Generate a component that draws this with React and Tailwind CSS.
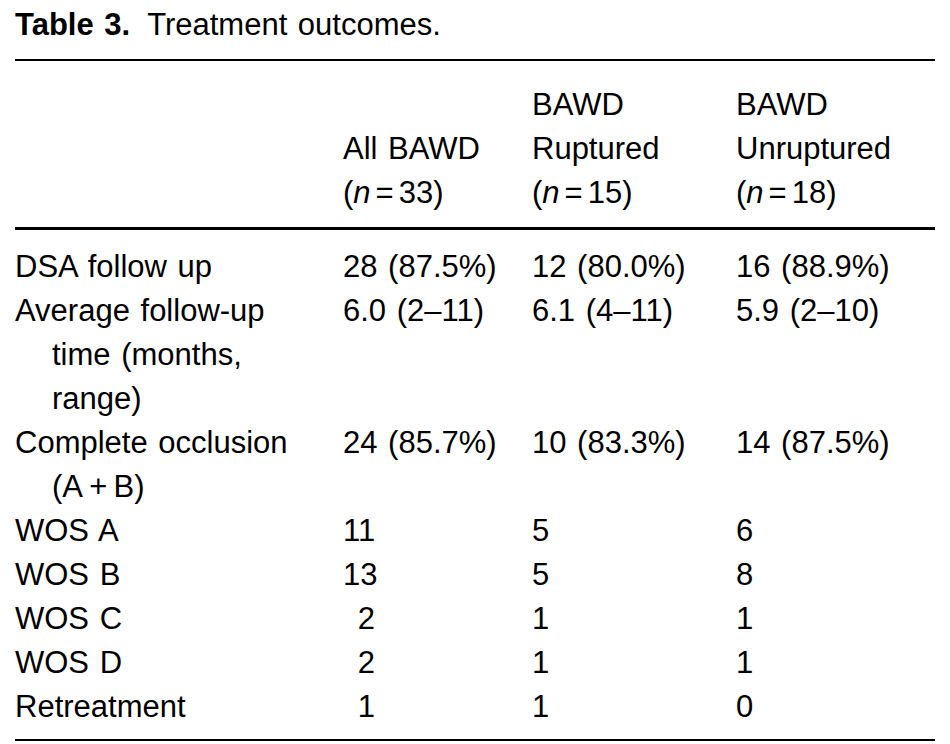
import React from "react";

const rows = [
  { label: "DSA follow up", a: "28 (87.5%)", b: "12 (80.0%)", c: "16 (88.9%)" },
  { label: "Average follow-up time (months, range)", a: "6.0 (2–11)", b: "6.1 (4–11)", c: "5.9 (2–10)" },
  { label: "Complete occlusion (A\u2009+\u2009B)", a: "24 (85.7%)", b: "10 (83.3%)", c: "14 (87.5%)" },
  { label: "WOS A", a: "11", b: "5", c: "6", pad: true },
  { label: "WOS B", a: "13", b: "5", c: "8", pad: true },
  { label: "WOS C", a: "2", b: "1", c: "1", pad: true },
  { label: "WOS D", a: "2", b: "1", c: "1", pad: true },
  { label: "Retreatment", a: "1", b: "1", c: "0", pad: true },
];

const N = ({ v }) => (
  <span>
    (<i>n</i>
    <span className="mx-[5px]">=</span>
    {v})
  </span>
);

const App = () => {
  return (
    <div className="w-[950px] h-[744px] bg-white text-black font-['Liberation_Sans',Arial,sans-serif] text-[31px] leading-[44px] [word-spacing:2px] px-[15px] overflow-hidden">
      <div className="pt-[3px] h-[59px]">
        <span className="font-bold">Table 3.</span>
        <span className="ml-[17px]">Treatment outcomes.</span>
      </div>
      <div className="border-t-2 border-black" />

      <div className="grid grid-cols-[328px_189px_204px_1fr] pt-[22px] pb-[12px] items-end">
        <div />
        <div>
          All BAWD
          <br />
          <N v="33" />
        </div>
        <div>
          BAWD
          <br />
          Ruptured
          <br />
          <N v="15" />
        </div>
        <div>
          BAWD
          <br />
          Unruptured
          <br />
          <N v="18" />
        </div>
      </div>
      <div className="border-t-[3px] border-black" />

      <div className="pt-[15px] pb-[10px]">
        {rows.map((r) => (
          <div key={r.label} className="grid grid-cols-[328px_189px_204px_1fr]">
            <div className="pl-[37px] -indent-[37px] pr-[20px]">{r.label}</div>
            <div>
              {r.pad ? <span className="inline-block w-[32px] text-right">{r.a}</span> : r.a}
            </div>
            <div>{r.b}</div>
            <div>{r.c}</div>
          </div>
        ))}
      </div>
      <div className="border-t-2 border-black" />
    </div>
  );
};

export default App;
